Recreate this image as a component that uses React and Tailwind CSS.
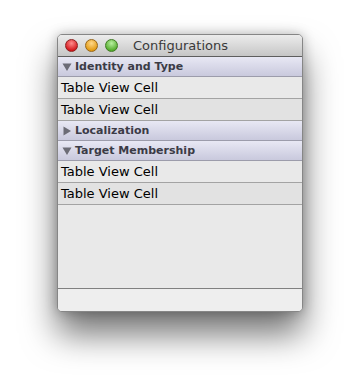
import React from 'react';

const font = { fontFamily: '"DejaVu Sans", "Liberation Sans", sans-serif' };

// Traffic light button
function Light({ from, to, ring }) {
  return (
    <div
      className="w-[13px] h-[13px] rounded-full border"
      style={{
        background: `radial-gradient(circle at 50% 30%, ${from} 0%, ${to} 75%)`,
        borderColor: ring
      }}
    />
  );
}

function Disclosure({ open }) {
  return (
    <svg width="10" height="10" viewBox="0 0 10 10" className="shrink-0">
      {open
        ? <polygon points="0.5,1.5 9.5,1.5 5,9" fill="#6c6c76" />
        : <polygon points="1.5,0.5 9,5 1.5,9.5" fill="#6c6c76" />}
    </svg>
  );
}

function SectionHeader({ title, open }) {
  return (
    <div className="h-[20px] flex items-center gap-[3px] pl-[4px] bg-gradient-to-b from-[#e8e8f4] to-[#c9c9dd] border-b border-[#9c9cab]">
      <Disclosure open={open} />
      <span className="text-[11px] font-bold text-[#3b3b46] leading-none">{title}</span>
    </div>
  );
}

function Cell({ dark }) {
  return (
    <div className={`h-[22px] flex items-center pl-[3px] pt-[1px] border-b border-[#a3a3a3] text-[13px] text-black ${dark ? 'bg-[#e2e2e2]' : 'bg-[#e9e9e9]'}`}>
      Table View Cell
    </div>
  );
}

export default function App() {
  return (
    <div className="w-[359px] h-[390px] bg-white pt-[34px] pl-[57px]" style={font}>
      <div className="w-[246px] h-[278px] flex flex-col rounded-[5px] border border-[#868686] overflow-hidden bg-[#e9e9e9] shadow-[0_22px_34px_rgba(0,0,0,0.55),0_0_12px_rgba(0,0,0,0.25)]">
        <div className="h-[22px] relative flex items-center bg-gradient-to-b from-[#ececec] to-[#c6c6c6] border-b border-[#5e5e5e]">
          <div className="flex items-center gap-[7px] pl-[7px]">
            <Light from="#ff8c8c" to="#d4161b" ring="#8c2020" />
            <Light from="#ffd88a" to="#e29a12" ring="#966519" />
            <Light from="#b8f0a0" to="#54ac2c" ring="#3f7a24" />
          </div>
          <div className="absolute left-0 right-0 text-center pl-[1px] text-[13px] text-[#3a3a3a] pointer-events-none">
            Configurations
          </div>
        </div>
        <SectionHeader title="Identity and Type" open />
        <Cell />
        <Cell dark />
        <SectionHeader title="Localization" />
        <SectionHeader title="Target Membership" open />
        <Cell />
        <Cell dark />
        <div className="flex-1 bg-[#e9e9e9] border-b border-[#808080]" />
        <div className="h-[22px] bg-[#eeeeee]" />
      </div>
    </div>
  );
}
